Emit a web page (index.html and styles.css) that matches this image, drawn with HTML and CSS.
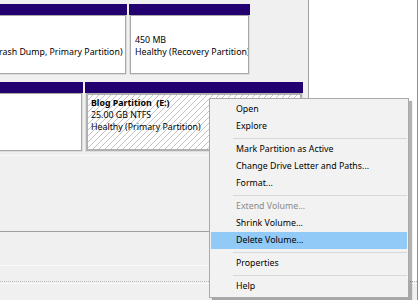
FILE: index.html
```html
<!DOCTYPE html>
<html>
<head>
<meta charset="utf-8">
<link rel="stylesheet" href="styles.css">
</head>
<body>
<div class="screen">
  <div class="main">
    <div class="map">
      <div class="disk-row row1">
        <div class="part p-sys">
          <div class="bar"></div>
          <div class="body">
            <div class="line b">(C:)</div>
            <div class="line">59.00 GB NTFS</div>
            <div class="line">Healthy (Boot, Page File, Crash Dump, Primary Partition)</div>
          </div>
        </div>
        <div class="part p-rec">
          <div class="bar"></div>
          <div class="body">
            <div class="line b">&nbsp;</div>
            <div class="line">450 MB</div>
            <div class="line">Healthy (Recovery Partition)</div>
          </div>
        </div>
      </div>
      <div class="disk-row row2">
        <div class="part p-left">
          <div class="bar"></div>
          <div class="body"></div>
        </div>
        <div class="part p-blog">
          <div class="bar"></div>
          <div class="body hatched">
            <div class="line b">Blog Partition&nbsp; (E:)</div>
            <div class="line">25.00 GB NTFS</div>
            <div class="line">Healthy (Primary Partition)</div>
          </div>
        </div>
      </div>
      <div class="row3"></div>
      <div class="row4"></div>
      <div class="row5"></div>
    </div>
    <div class="blank"></div>
  </div>
  <div class="status"></div>

  <div class="menu">
    <div class="item">Open</div>
    <div class="item">Explore</div>
    <div class="sep"></div>
    <div class="item">Mark Partition as Active</div>
    <div class="item">Change Drive Letter and Paths...</div>
    <div class="item">Format...</div>
    <div class="sep"></div>
    <div class="item disabled">Extend Volume...</div>
    <div class="item">Shrink Volume...</div>
    <div class="item active">Delete Volume...</div>
    <div class="sep"></div>
    <div class="item">Properties</div>
    <div class="sep"></div>
    <div class="item">Help</div>
  </div>
</div>
</body>
</html>
```

FILE: styles.css
```css
* { box-sizing: border-box; margin: 0; padding: 0; }
html, body { width: 418px; height: 300px; overflow: hidden; }
body {
  font-family: "Noto Sans", "Segoe UI", "Liberation Sans", sans-serif;
  font-size: 8.8px;
  color: #000;
  background: #f0f0f0;
}
.screen {
  position: relative;
  width: 418px;
  height: 300px;
  border-right: 1px solid #5a9ad8;
  display: flex;
  flex-direction: column;
}
.main { display: flex; height: 281px; }
.map {
  width: 309px;
  border-right: 1px solid #a0a0a0;
  background: #f0f0f0;
  overflow: hidden;
  display: flex;
  flex-direction: column;
}
.blank { flex: 1; background: #fff; }

.disk-row { display: flex; gap: 2px; padding-top: 4px; }
.row1 { height: 78px; }
.row2 { height: 77px; }

.part {
  display: flex;
  flex-direction: column;
  background: #dedede;
  padding: 0 1px 1px;
  flex: none;
}
.bar { height: 11px; margin: 0 -1px; background: #22006f; }
.body {
  flex: 1;
  background: #fff;
  border: 1px solid #a8a8a8;
  padding: 5px 4px 0;
  white-space: nowrap;
  overflow: hidden;
}
.line { height: 12.5px; line-height: 12.5px; }
.b { font-weight: bold; }

.p-sys { margin-left: -115px; width: 242px; height: 71px; }
.p-rec { width: 121px; height: 71px; }
.p-left { margin-left: -20px; width: 103px; height: 70px; }
.p-blog { width: 218px; height: 70px; }
.p-blog .body { border: 2px solid #b0b0b0; padding: 3px 3px 0; }
.p-blog .line { height: 11.8px; line-height: 11.8px; }
.hatched {
  background: repeating-linear-gradient(135deg, #fff 0, #fff 3.2px, #c4c4c4 3.2px, #c4c4c4 4.24px);
}

.row3 { height: 77px; border-top: 1px solid #f8f8f8; border-bottom: 1px solid #a0a0a0; }
.row4 { height: 34px; border-bottom: 1px solid #fbfbfb; }
.row5 { flex: 1; }

.status {
  flex: 1;
  border-top: 1px dotted #b5b5b5;
  box-shadow: inset 0 1px 0 #f0f0f0, inset 0 2px 0 #fafafa;
}

.menu {
  position: absolute;
  left: 209px;
  top: 98px;
  width: 200px;
  background: #f2f2f2;
  border: 1px solid #a9a9a9;
  padding: 2px 0;
  box-shadow: 3px 3px 1px rgba(0, 0, 0, 0.3);
  font-size: 8.8px;
}
.item {
  height: 17px;
  line-height: 16px;
  margin: 0 1px;
  padding-left: 25px;
  white-space: nowrap;
}
.item.disabled { color: #8a8a8a; }
.item.active { background: #91c9f7; }
.sep {
  height: 6px;
  margin: 0 1px 0 23px;
  position: relative;
}
.sep::after {
  content: "";
  position: absolute;
  left: 0; right: 0; top: 3px;
  height: 1px;
  background: #d7d7d7;
}
```
